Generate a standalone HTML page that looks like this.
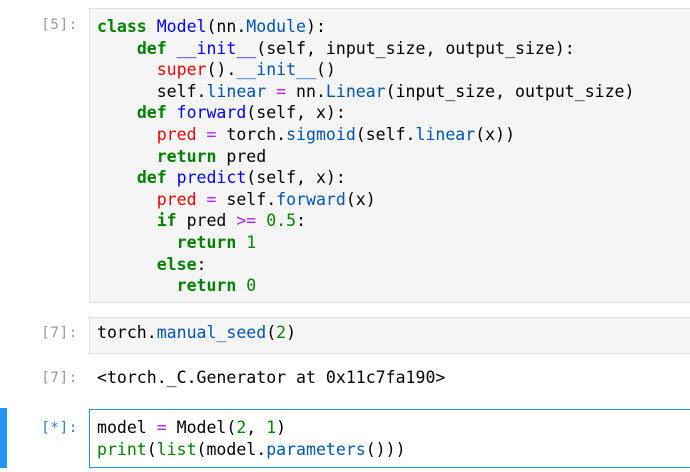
<!DOCTYPE html>
<html><head><style>
body{margin:0;width:690px;height:472px;background:#fff;overflow:hidden;position:relative;font-family:"DejaVu Sans Mono","Liberation Mono",monospace;}
.box{position:absolute;left:89px;right:-5px;background:#f5f5f5;border:1px solid #e0e0e0;}
pre{margin:0;font-family:"DejaVu Sans Mono","Liberation Mono",monospace;font-size:16.55px;line-height:21.6px;color:#000;position:absolute;left:97px;white-space:pre;}
.p{position:absolute;left:0;width:78px;text-align:right;font-size:14.5px;color:#999;font-family:"DejaVu Sans Mono",monospace;letter-spacing:0.5px}
.k{color:#008000;font-weight:bold}.c{color:#0000ff}.a{color:#0055aa}.r{color:#e00}.o{color:#aa22ff}.n{color:#008000}
</style></head><body>
<div class="box" style="top:8px;height:293px"></div>
<div class="p" style="top:17px">[5]:</div>
<pre style="top:16px"><span class="k">class</span> <span class="c">Model</span>(nn.<span class="a">Module</span>):
    <span class="k">def</span> <span class="c">__init__</span>(self, input_size, output_size):
      <span class="r">super</span>().<span class="a">__init__</span>()
      self.<span class="a">linear</span> <span class="o">=</span> nn.<span class="a">Linear</span>(input_size, output_size)
    <span class="k">def</span> <span class="c">forward</span>(self, x):
      <span class="r">pred</span> <span class="o">=</span> torch.<span class="a">sigmoid</span>(self.<span class="a">linear</span>(x))
      <span class="k">return</span> pred
    <span class="k">def</span> <span class="c">predict</span>(self, x):
      <span class="r">pred</span> <span class="o">=</span> self.<span class="a">forward</span>(x)
      <span class="k">if</span> pred <span class="o">&gt;=</span> <span class="n">0.5</span>:
        <span class="k">return</span> <span class="n">1</span>
      <span class="k">else</span>:
        <span class="k">return</span> <span class="n">0</span></pre>
<div class="box" style="top:317px;height:35px"></div>
<div class="p" style="top:325px">[7]:</div>
<pre style="top:322px">torch.<span class="a">manual_seed</span>(<span class="n">2</span>)</pre>
<div class="p" style="top:370px">[7]:</div>
<pre style="top:367px">&lt;torch._C.Generator at 0x11c7fa190&gt;</pre>
<div style="position:absolute;left:0;top:408px;width:7px;height:60px;background:#2196f3"></div>
<div class="box" style="top:409px;height:57px;border-color:#2196f3;background:#fff"></div>
<div class="p" style="top:420px;color:#307fc1">[*]:</div>
<pre style="top:417px">model <span class="o">=</span> Model(<span class="n">2</span>, <span class="n">1</span>)
<span class="n">print</span>(<span class="n">list</span>(model.<span class="a">parameters</span>()))</pre>
</body></html>
